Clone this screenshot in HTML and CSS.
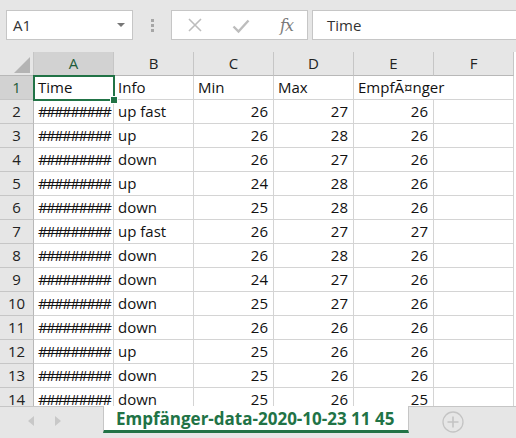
FILE: index.html
```html
<!DOCTYPE html>
<html>
<head>
<meta charset="utf-8">
<link rel="stylesheet" href="styles.css">
</head>
<body>
<div class="app">
  <div class="toolbar">
    <div class="namebox"><span class="ref">A1</span><span class="drop"></span></div>
    <div class="dots"><i></i><i></i><i></i></div>
    <div class="fbuttons">
      <svg class="btn-x" width="16" height="16" viewBox="0 0 16 16"><path d="M2 2 L14 14 M14 2 L2 14" stroke="#bdbdbd" stroke-width="1.6" fill="none"/></svg>
      <svg class="btn-ok" width="18" height="16" viewBox="0 0 18 16"><path d="M1.5 8.5 L6.5 13.5 L16.5 2.5" stroke="#bdbdbd" stroke-width="2.4" fill="none"/></svg>
      <span class="fx">fx</span>
    </div>
    <div class="fbox">Time</div>
  </div>
  <div class="sheet">
    <div class="corner"><span class="tri"></span></div>
    <div class="ch sel">A</div><div class="ch">B</div><div class="ch">C</div><div class="ch">D</div><div class="ch">E</div><div class="ch">F</div>

    <div class="rh sel">1</div><div class="c a1">Time</div><div class="c">Info</div><div class="c">Min</div><div class="c">Max</div><div class="c over">EmpfÃ¤nger</div><div class="c nol"></div>
    <div class="rh">2</div><div class="c h">#########</div><div class="c">up fast</div><div class="c n">26</div><div class="c n">27</div><div class="c n">26</div><div class="c"></div>
    <div class="rh">3</div><div class="c h">#########</div><div class="c">up</div><div class="c n">26</div><div class="c n">28</div><div class="c n">26</div><div class="c"></div>
    <div class="rh">4</div><div class="c h">#########</div><div class="c">down</div><div class="c n">26</div><div class="c n">27</div><div class="c n">26</div><div class="c"></div>
    <div class="rh">5</div><div class="c h">#########</div><div class="c">up</div><div class="c n">24</div><div class="c n">28</div><div class="c n">26</div><div class="c"></div>
    <div class="rh">6</div><div class="c h">#########</div><div class="c">down</div><div class="c n">25</div><div class="c n">28</div><div class="c n">26</div><div class="c"></div>
    <div class="rh">7</div><div class="c h">#########</div><div class="c">up fast</div><div class="c n">26</div><div class="c n">27</div><div class="c n">27</div><div class="c"></div>
    <div class="rh">8</div><div class="c h">#########</div><div class="c">down</div><div class="c n">26</div><div class="c n">28</div><div class="c n">26</div><div class="c"></div>
    <div class="rh">9</div><div class="c h">#########</div><div class="c">down</div><div class="c n">24</div><div class="c n">27</div><div class="c n">26</div><div class="c"></div>
    <div class="rh">10</div><div class="c h">#########</div><div class="c">down</div><div class="c n">25</div><div class="c n">27</div><div class="c n">26</div><div class="c"></div>
    <div class="rh">11</div><div class="c h">#########</div><div class="c">down</div><div class="c n">26</div><div class="c n">26</div><div class="c n">26</div><div class="c"></div>
    <div class="rh">12</div><div class="c h">#########</div><div class="c">up</div><div class="c n">25</div><div class="c n">26</div><div class="c n">26</div><div class="c"></div>
    <div class="rh">13</div><div class="c h">#########</div><div class="c">down</div><div class="c n">25</div><div class="c n">26</div><div class="c n">26</div><div class="c"></div>
    <div class="rh">14</div><div class="c h">#########</div><div class="c">down</div><div class="c n">25</div><div class="c n">26</div><div class="c n">25</div><div class="c"></div>
  </div>
  <div class="tabbar">
    <div class="nav">
      <svg width="8" height="12" viewBox="0 0 8 12"><path d="M7 1 L1 6 L7 11 Z" fill="#c8c8c8"/></svg>
      <svg width="8" height="12" viewBox="0 0 8 12"><path d="M1 1 L7 6 L1 11 Z" fill="#c8c8c8"/></svg>
    </div>
    <div class="tab">Empfänger-data-2020-10-23 11 45</div>
    <div class="tabrest">
      <svg class="plus" width="22" height="22" viewBox="0 0 22 22"><circle cx="11" cy="11" r="10" fill="none" stroke="#c4c4c4" stroke-width="1.3"/><path d="M11 5.5 V16.5 M5.5 11 H16.5" stroke="#c4c4c4" stroke-width="1.6"/></svg>
    </div>
  </div>
</div>
</body>
</html>
```
FILE: styles.css
```css
html, body {
  margin: 0;
  padding: 0;
}
body {
  width: 516px;
  height: 438px;
  overflow: hidden;
  background: #e6e6e6;
  font-family: "Open Sans", "Noto Sans", sans-serif;
}
.app {
  display: flex;
  flex-direction: column;
  width: 516px;
  height: 438px;
}
.toolbar {
  height: 52px;
  box-sizing: border-box;
  padding: 10px 0 0 6px;
  display: flex;
  align-items: flex-start;
  background: #e6e6e6;
}
.namebox {
  width: 127px;
  height: 30px;
  box-sizing: border-box;
  background: #fff;
  border: 1px solid #c6c6c6;
  display: flex;
  align-items: center;
  justify-content: space-between;
  padding: 0 7px 0 6px;
  font-size: 15px;
  color: #333;
}
.drop {
  width: 0;
  height: 0;
  border-left: 4px solid transparent;
  border-right: 4px solid transparent;
  border-top: 4px solid #777;
}
.dots {
  width: 38px;
  height: 30px;
  display: flex;
  flex-direction: column;
  align-items: center;
  justify-content: center;
  gap: 2px;
}
.dots i {
  display: block;
  width: 3px;
  height: 3px;
  background: #a6a6a6;
}
.fbuttons {
  width: 137px;
  height: 30px;
  box-sizing: border-box;
  background: #fff;
  border: 1px solid #c6c6c6;
  display: flex;
  align-items: center;
  padding-left: 15px;
}
.btn-x { margin-right: 29px; }
.btn-ok { margin-right: 30px; margin-top: 2px; }
.fx {
  font-family: "DejaVu Serif", "Liberation Serif", serif;
  font-style: italic;
  font-size: 16px;
  color: #7a7a7a;
  letter-spacing: -1px;
}
.fbox {
  margin-left: 4px;
  flex: 1;
  height: 30px;
  box-sizing: border-box;
  background: #fff;
  border: 1px solid #c6c6c6;
  border-right: none;
  padding-left: 14px;
  font-size: 15px;
  line-height: 28px;
  color: #333;
}
.sheet {
  height: 355px;
  overflow: hidden;
  display: grid;
  grid-template-columns: 34px repeat(6, 80px);
  grid-auto-rows: 24px;
  background: #fff;
  position: relative;
  font-size: 15px;
  color: #111;
}
.corner {
  background: #e6e6e6;
  border-right: 1px solid #c6c6c6;
  border-bottom: 1px solid #b8b8b8;
  box-sizing: border-box;
  position: relative;
}
.tri {
  position: absolute;
  right: 3px;
  bottom: 2px;
  width: 0;
  height: 0;
  border-left: 16px solid transparent;
  border-bottom: 16px solid #b4b4b4;
}
.ch {
  background: #e6e6e6;
  border-right: 1px solid #c6c6c6;
  border-bottom: 1px solid #b8b8b8;
  box-sizing: border-box;
  text-align: center;
  line-height: 23px;
  color: #222;
}
.ch.sel, .rh.sel {
  background: #d2d2d2;
  color: #1e5c3a;
}
.rh {
  background: #e6e6e6;
  border-right: 1px solid #b8b8b8;
  border-bottom: 1px solid #c6c6c6;
  box-sizing: border-box;
  text-align: center;
  line-height: 23px;
  color: #222;
}
.c {
  border-right: 1px solid #d4d4d4;
  border-bottom: 1px solid #d4d4d4;
  box-sizing: border-box;
  padding: 0 4px;
  line-height: 23px;
  white-space: nowrap;
  overflow: hidden;
}
.c.h {
  font-size: 15px;
  letter-spacing: -1.65px;
  padding-left: 4px;
  padding-right: 0;
}
.c.n { text-align: right; padding-right: 5px; }
.c.over {
  overflow: visible;
  border-right: none;
  position: relative;
  z-index: 1;
}
.c.a1 {
  position: relative;
  overflow: visible;
}
.c.a1::before {
  content: "";
  position: absolute;
  left: -1px;
  top: -1px;
  right: -2px;
  bottom: -2px;
  border: 2px solid #217346;
}
.c.a1::after {
  content: "";
  position: absolute;
  right: -5px;
  bottom: -5px;
  width: 6px;
  height: 6px;
  background: #217346;
  border: 1px solid #fff;
  z-index: 2;
}
.tabbar {
  flex: 1;
  display: flex;
  background: #e6e6e6;
  position: relative;
}
.nav {
  width: 103px;
  box-sizing: border-box;
  border-top: 1px solid #c6c6c6;
  display: flex;
  padding: 8px 0 0 27px;
  gap: 19px;
}
.tab {
  width: 306px;
  height: 27px;
  box-sizing: border-box;
  background: #fff;
  border-left: 1px solid #c6c6c6;
  border-right: 1px solid #c6c6c6;
  border-bottom: 3px solid #217346;
  color: #217346;
  font-weight: 700;
  font-size: 17px;
  line-height: 22px;
  padding: 2px 0 0 12px;
  white-space: nowrap;
}
.tabrest {
  flex: 1;
  border-top: 1px solid #c6c6c6;
  padding: 4px 0 0 33px;
}
```
